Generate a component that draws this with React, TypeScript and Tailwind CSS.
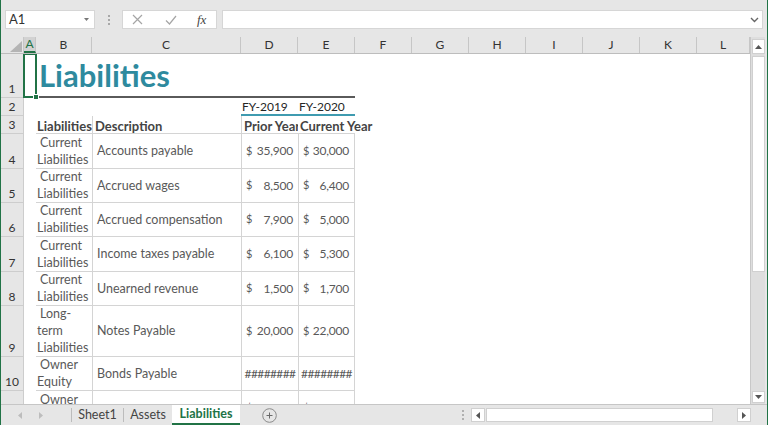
import React from "react";

type RowProps = { h: string; n: string; sel?: boolean; children?: React.ReactNode };

function Row({ h, n, sel, children }: RowProps) {
  return (
    <div className={`flex shrink-0 ${h}`}>
      <div className="w-[23px] shrink-0 border-r border-b border-[#cdcdcd] bg-[#e6e6e6] flex items-end justify-center pb-[2px] text-[12px] leading-[13px] text-[#333]">
        {n}
      </div>
      <div className="w-[12px] shrink-0 relative">
        {sel ? (
          <div className="absolute left-[-1px] top-[-1px] w-[14px] h-[45px] border-2 border-[#217346] z-20">
            <div className="absolute right-[-4px] bottom-[-4px] w-[6px] h-[6px] bg-[#217346] border border-white" />
          </div>
        ) : null}
      </div>
      {children}
    </div>
  );
}

function Money({ v, last }: { v: string; last?: boolean }) {
  const base = last
    ? "w-[57px] shrink-0 border-l border-r border-b border-[#d4d4d4] flex items-center text-[12px] text-[#595959] whitespace-nowrap overflow-hidden"
    : "w-[57px] shrink-0 border-l border-b border-[#d4d4d4] flex items-center text-[12px] text-[#595959] whitespace-nowrap overflow-hidden";
  if (v === "#") {
    return <div className={`${base} justify-center tracking-[-0.6px]`}>########</div>;
  }
  return (
    <div className={`${base} justify-between pl-[4px] pr-[5px]`}>
      <span className="text-[11px]">$</span>
      <span className="tracking-[-0.2px]">{v}</span>
    </div>
  );
}

type DataProps = { h: string; n: string; b: string[]; c: string; d: string; e: string };

function DataRow({ h, n, b, c, d, e }: DataProps) {
  return (
    <Row h={h} n={n}>
      <div className="w-[56px] shrink-0 border-b border-[#d4d4d4] flex flex-col justify-end text-[12.5px] leading-[17px] text-[#595959] overflow-hidden whitespace-nowrap">
        {b.map((l, i) => (
          <span key={i} className={i === 0 ? "pl-[4px]" : "pl-[1px]"}>
            {l}
          </span>
        ))}
      </div>
      <div className="w-[149px] shrink-0 border-l border-b border-[#d4d4d4] flex items-center pl-[4px] pt-[1px] text-[12.5px] text-[#595959] whitespace-nowrap">
        {c}
      </div>
      <Money v={d} />
      <Money v={e} last />
      <div className="flex-1" />
    </Row>
  );
}

const COLS: { k: string; w: string }[] = [
  { k: "B", w: "w-[56px]" },
  { k: "C", w: "w-[149px]" },
  { k: "D", w: "w-[57px]" },
  { k: "E", w: "w-[57px]" },
  { k: "F", w: "w-[57px]" },
  { k: "G", w: "w-[57px]" },
  { k: "H", w: "w-[57px]" },
  { k: "I", w: "w-[57px]" },
  { k: "J", w: "w-[57px]" },
  { k: "K", w: "w-[57px]" },
  { k: "L", w: "w-[53px]" },
];

const ROWS: DataProps[] = [
  { h: "h-[35px]", n: "4", b: ["Current", "Liabilities"], c: "Accounts payable", d: "35,900", e: "30,000" },
  { h: "h-[34px]", n: "5", b: ["Current", "Liabilities"], c: "Accrued wages", d: "8,500", e: "6,400" },
  { h: "h-[34px]", n: "6", b: ["Current", "Liabilities"], c: "Accrued compensation", d: "7,900", e: "5,000" },
  { h: "h-[35px]", n: "7", b: ["Current", "Liabilities"], c: "Income taxes payable", d: "6,100", e: "5,300" },
  { h: "h-[34px]", n: "8", b: ["Current", "Liabilities"], c: "Unearned revenue", d: "1,500", e: "1,700" },
  { h: "h-[51px]", n: "9", b: ["Long-", "term", "Liabilities"], c: "Notes Payable", d: "20,000", e: "22,000" },
  { h: "h-[34px]", n: "10", b: ["Owner", "Equity"], c: "Bonds Payable", d: "#", e: "#" },
];

export default function App() {
  return (
    <div className="w-[768px] h-[425px] overflow-hidden flex flex-col bg-[#e6e6e6] border-x border-[#217346] font-[Lato,sans-serif] select-none">
      {/* formula bar */}
      <div className="h-[37px] shrink-0 flex items-start pt-[10px] pl-[4px] pr-[4px]">
        <div className="w-[90px] h-[19px] bg-white border border-[#d6d6d6] flex items-center justify-between pl-[3px] pr-[5px]">
          <span className="text-[13px] leading-none text-[#333]">A1</span>
          <svg width="5" height="3" viewBox="0 0 5 3">
            <path d="M0 0h5L2.5 3z" fill="#777" />
          </svg>
        </div>
        <div className="w-[27px] h-[19px] flex flex-col items-center justify-center gap-[2px]">
          <span className="w-[2px] h-[2px] bg-[#a8a8a8]" />
          <span className="w-[2px] h-[2px] bg-[#a8a8a8]" />
          <span className="w-[2px] h-[2px] bg-[#a8a8a8]" />
        </div>
        <div className="w-[95px] h-[19px] bg-white border border-[#d6d6d6] flex items-center">
          <svg className="ml-[9px]" width="11" height="11" viewBox="0 0 11 11">
            <path d="M1 1L10 10M10 1L1 10" stroke="#a5a5a5" strokeWidth="1.2" fill="none" />
          </svg>
          <svg className="ml-[22px]" width="12" height="10" viewBox="0 0 12 10">
            <path d="M1 5.5L4.5 9L11 1" stroke="#a5a5a5" strokeWidth="1.2" fill="none" />
          </svg>
          <span className="ml-[20px] font-['Liberation_Serif',serif] italic text-[13px] leading-none text-[#444]">
            fx
          </span>
        </div>
        <div className="ml-[5px] flex-1 h-[19px] bg-white border border-[#d6d6d6] flex items-center justify-end pr-[3px]">
          <svg width="9" height="6" viewBox="0 0 9 6">
            <path d="M1 1L4.5 4.5L8 1" stroke="#666" strokeWidth="1.4" fill="none" />
          </svg>
        </div>
      </div>

      {/* sheet area */}
      <div className="h-[367px] shrink-0 flex">
        <div className="w-[750px] shrink-0 flex flex-col border-r border-[#c8c8c8]">
          {/* column headers */}
          <div className="h-[17px] shrink-0 flex bg-[#e6e6e6] border-b border-[#bdbdbd]">
            <div className="w-[23px] shrink-0 border-r border-[#c6c6c6] flex items-end justify-end pr-[1px] pb-[1px]">
              <svg width="12" height="11" viewBox="0 0 12 11">
                <path d="M12 0V11H0z" fill="#b4b4b4" />
              </svg>
            </div>
            <div className="w-[12px] shrink-0 bg-[#d2d2d2] border-r border-b-2 border-r-[#c6c6c6] border-b-[#217346] flex items-center justify-center text-[12px] leading-none text-[#217346]">
              A
            </div>
            {COLS.map((c) => (
              <div
                key={c.k}
                className={`${c.w} shrink-0 border-r border-[#c6c6c6] flex items-center justify-center text-[12px] leading-none text-[#333]`}
              >
                {c.k}
              </div>
            ))}
          </div>

          {/* body */}
          <div className="h-[350px] shrink-0 overflow-hidden bg-white flex flex-col">
            <Row h="h-[44px]" n="1" sel>
              <div className="w-[319px] shrink-0 border-b-2 border-[#5a5a5a] flex items-end pl-[3px] pb-[5px] text-[31px] font-bold leading-none text-[#2e8a9e] whitespace-nowrap">
                Liabilities
              </div>
              <div className="flex-1" />
            </Row>
            <Row h="h-[18px]" n="2">
              <div className="w-[205px] shrink-0" />
              <div className="w-[57px] shrink-0 border-b-2 border-[#3f9bb0] flex items-end pl-[1px] text-[12px] leading-[14px] text-[#262626] whitespace-nowrap">
                FY-2019
              </div>
              <div className="w-[57px] shrink-0 border-b-2 border-[#3f9bb0] flex items-end pl-[1px] text-[12px] leading-[14px] text-[#262626] whitespace-nowrap">
                FY-2020
              </div>
              <div className="flex-1" />
            </Row>
            <Row h="h-[18px]" n="3">
              <div className="w-[56px] shrink-0 border-b border-[#d4d4d4] flex items-end pl-[1px] text-[13px] leading-[14px] font-bold text-[#444] overflow-hidden whitespace-nowrap">
                Liabilities
              </div>
              <div className="w-[149px] shrink-0 border-l border-b border-[#d4d4d4] flex items-end pl-[2px] text-[13px] leading-[14px] font-bold text-[#444] whitespace-nowrap">
                Description
              </div>
              <div className="w-[57px] shrink-0 border-l border-b border-[#d4d4d4] flex items-end pl-[2px] text-[13px] leading-[14px] font-bold text-[#444] overflow-hidden whitespace-nowrap">
                Prior Year
              </div>
              <div className="w-[57px] shrink-0 border-b border-[#d4d4d4] flex items-end pl-[2px] text-[13px] leading-[14px] font-bold text-[#444] whitespace-nowrap">
                Current Year
              </div>
              <div className="flex-1" />
            </Row>
            {ROWS.map((r) => (
              <DataRow key={r.n} {...r} />
            ))}
            <Row h="h-[34px]" n="11">
              <div className="w-[56px] shrink-0 flex flex-col justify-end text-[12.5px] leading-[17px] text-[#595959] overflow-hidden whitespace-nowrap">
                <span className="pl-[4px]">Owner</span>
                <span className="pl-[1px]">Equity</span>
              </div>
              <div className="w-[149px] shrink-0 border-l border-[#d4d4d4]" />
              <div className="w-[57px] shrink-0 border-l border-[#d4d4d4] flex items-center pl-[4px] text-[11px] text-[#595959]">
                $
              </div>
              <div className="w-[57px] shrink-0 border-l border-r border-[#d4d4d4] flex items-center pl-[4px] text-[11px] text-[#595959]">
                $
              </div>
              <div className="flex-1" />
            </Row>
          </div>
        </div>

        {/* vertical scrollbar */}
        <div className="w-[14px] shrink-0 flex flex-col items-center bg-[#dedede] pt-[2px] pb-[1px]">
          <div className="w-[13px] h-[15px] shrink-0 bg-white border border-[#d0d0d0] flex items-center justify-center">
            <svg width="7" height="4" viewBox="0 0 7 4">
              <path d="M3.5 0L7 4H0z" fill="#555" />
            </svg>
          </div>
          <div className="mt-[2px] w-[13px] h-[216px] shrink-0 bg-white border border-[#d0d0d0]" />
          <div className="flex-1" />
          <div className="w-[13px] h-[12px] shrink-0 bg-white border border-[#d0d0d0] flex items-center justify-center">
            <svg width="7" height="4" viewBox="0 0 7 4">
              <path d="M0 0H7L3.5 4z" fill="#555" />
            </svg>
          </div>
        </div>
        <div className="w-[2px] shrink-0" />
      </div>

      {/* sheet tabs */}
      <div className="h-[21px] shrink-0 flex items-stretch border-t border-[#c6c6c6] bg-[#e6e6e6]">
        <div className="w-[70px] shrink-0 flex items-center pl-[17px]">
          <svg width="4" height="7" viewBox="0 0 4 7">
            <path d="M4 0V7L0 3.5z" fill="#bdbdbd" />
          </svg>
          <svg className="ml-[17px]" width="4" height="7" viewBox="0 0 4 7">
            <path d="M0 0V7L4 3.5z" fill="#bdbdbd" />
          </svg>
        </div>
        <div className="w-px shrink-0 my-[3px] bg-[#bcbcbc]" />
        <div className="w-[51px] shrink-0 flex items-center justify-center text-[12.5px] text-[#444]">Sheet1</div>
        <div className="w-px shrink-0 my-[3px] bg-[#bcbcbc]" />
        <div className="w-[48px] shrink-0 flex items-center justify-center text-[12.5px] text-[#444]">Assets</div>
        <div className="w-[68px] shrink-0 flex items-center justify-center bg-white border-b-2 border-[#217346] text-[12.5px] font-bold text-[#217346]">
          Liabilities
        </div>
        <div className="ml-[22px] flex items-center">
          <svg width="15" height="15" viewBox="0 0 15 15">
            <circle cx="7.5" cy="7.5" r="6.8" stroke="#8a8a8a" strokeWidth="1" fill="none" />
            <path d="M7.5 4.5V10.5M4.5 7.5H10.5" stroke="#6a6a6a" strokeWidth="1" />
          </svg>
        </div>
        <div className="flex-1" />
        <div className="w-[8px] shrink-0 flex flex-col items-center justify-center gap-[2px] mr-[4px]">
          <span className="w-[2px] h-[2px] bg-[#b0b0b0]" />
          <span className="w-[2px] h-[2px] bg-[#b0b0b0]" />
          <span className="w-[2px] h-[2px] bg-[#b0b0b0]" />
        </div>
        <div className="w-[280px] shrink-0 flex items-center">
          <div className="w-[14px] h-[14px] shrink-0 bg-white border border-[#d0d0d0] flex items-center justify-center">
            <svg width="4" height="7" viewBox="0 0 4 7">
              <path d="M4 0V7L0 3.5z" fill="#555" />
            </svg>
          </div>
          <div className="ml-[1px] w-[227px] h-[14px] shrink-0 bg-white border border-[#d0d0d0]" />
          <div className="flex-1" />
          <div className="w-[14px] h-[14px] shrink-0 bg-white border border-[#d0d0d0] flex items-center justify-center">
            <svg width="4" height="7" viewBox="0 0 4 7">
              <path d="M0 0V7L4 3.5z" fill="#555" />
            </svg>
          </div>
        </div>
        <div className="w-[16px] shrink-0" />
      </div>
    </div>
  );
}
